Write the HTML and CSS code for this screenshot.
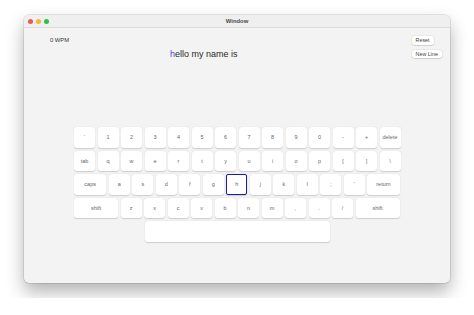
FILE: index.html
```html
<!DOCTYPE html>
<html>
<head>
<meta charset="utf-8">
<link rel="stylesheet" href="styles.css">
</head>
<body>
<div class="window">
  <div class="titlebar">
    <div class="lights">
      <span class="light red"></span>
      <span class="light yellow"></span>
      <span class="light green"></span>
    </div>
    <div class="title">Window</div>
  </div>
  <div class="content">
    <div class="top">
      <div class="left">
        <div class="wpm">0 WPM</div>
        <div class="line"><span class="cur">h</span>ello my name is</div>
      </div>
      <div class="controls">
        <button class="btn">Reset</button>
        <button class="btn">New Line</button>
      </div>
    </div>
    <div class="keyboard">
      <div class="row">
        <div class="key">`</div><div class="key">1</div><div class="key">2</div><div class="key">3</div><div class="key">4</div><div class="key">5</div><div class="key">6</div><div class="key">7</div><div class="key">8</div><div class="key">9</div><div class="key">0</div><div class="key">-</div><div class="key">+</div><div class="key">delete</div>
      </div>
      <div class="row">
        <div class="key">tab</div><div class="key">q</div><div class="key">w</div><div class="key">e</div><div class="key">r</div><div class="key">t</div><div class="key">y</div><div class="key">u</div><div class="key">i</div><div class="key">o</div><div class="key">p</div><div class="key">[</div><div class="key">]</div><div class="key">\</div>
      </div>
      <div class="row">
        <div class="key mid">caps</div><div class="key">a</div><div class="key">s</div><div class="key">d</div><div class="key">f</div><div class="key">g</div><div class="key active">h</div><div class="key">j</div><div class="key">k</div><div class="key">l</div><div class="key">;</div><div class="key">'</div><div class="key mid">return</div>
      </div>
      <div class="row">
        <div class="key wide">shift</div><div class="key">z</div><div class="key">x</div><div class="key">c</div><div class="key">v</div><div class="key">b</div><div class="key">n</div><div class="key">m</div><div class="key">,</div><div class="key">.</div><div class="key">/</div><div class="key wide">shift</div>
      </div>
      <div class="row center">
        <div class="key space"></div>
      </div>
    </div>
  </div>
</div>
</body>
</html>
```
FILE: styles.css
```css
* { box-sizing: border-box; }
html, body { margin: 0; background: #ffffff; }
body {
  padding: 15px 24px;
  font-family: "Liberation Sans", Arial, sans-serif;
}
.window {
  width: 426px;
  height: 268px;
  border-radius: 5px;
  background: #f3f3f3;
  box-shadow: 0 0 0 0.5px rgba(0,0,0,0.18), 0 9px 18px rgba(0,0,0,0.3);
  overflow: hidden;
  display: flex;
  flex-direction: column;
}
.titlebar {
  height: 13px;
  flex: none;
  background: #efefef;
  border-bottom: 1px solid #dcdcdc;
  display: flex;
  align-items: center;
  position: relative;
}
.lights {
  display: flex;
  gap: 3.4px;
  padding-left: 3.5px;
}
.light {
  width: 5px;
  height: 5px;
  border-radius: 50%;
  display: block;
}
.red { background: #f0584f; }
.yellow { background: #f5b73c; }
.green { background: #2cc440; }
.title {
  position: absolute;
  left: 0;
  right: 0;
  text-align: center;
  font-size: 5.9px;
  font-weight: bold;
  color: #4a4a4a;
}
.content {
  flex: 1;
  display: flex;
  flex-direction: column;
}
.top {
  display: flex;
  justify-content: space-between;
  padding: 8px 8px 0 26px;
}
.wpm {
  font-size: 5.8px;
  color: #333;
  line-height: 8px;
}
.line {
  margin-left: 120px;
  margin-top: 4px;
  font-size: 9px;
  color: #2a2a2a;
  line-height: 12px;
}
.cur { color: #5a3bd6; }
.controls {
  display: flex;
  flex-direction: column;
  align-items: flex-start;
  gap: 5px;
}
.btn {
  font-family: "Liberation Sans", Arial, sans-serif;
  font-size: 5.4px;
  color: #444;
  background: #fff;
  border: none;
  border-radius: 2.5px;
  height: 8.5px;
  padding: 0 4px;
  line-height: 8.5px;
  box-shadow: 0 0.5px 1px rgba(0,0,0,0.22), 0 0 0 0.5px rgba(0,0,0,0.06);
}
.keyboard {
  margin-top: 67px;
  align-self: center;
  width: 326px;
  display: flex;
  flex-direction: column;
  gap: 3px;
}
.row {
  display: flex;
  gap: 2.5px;
}
.row.center { justify-content: center; }
.key {
  flex: 0 0 21px;
  height: 20.5px;
  background: #fff;
  border-radius: 3px;
  box-shadow: 0 0.5px 1.2px rgba(0,0,0,0.16);
  display: flex;
  align-items: center;
  justify-content: center;
  font-size: 5.5px;
  color: #666;
}
.key.mid { flex-basis: 32.3px; }
.key.wide { flex-basis: 44px; }
.key.space { flex-basis: 185px; }
.key.active {
  border: 1.5px solid #1b1ba6;
  border-radius: 2px;
}
```
